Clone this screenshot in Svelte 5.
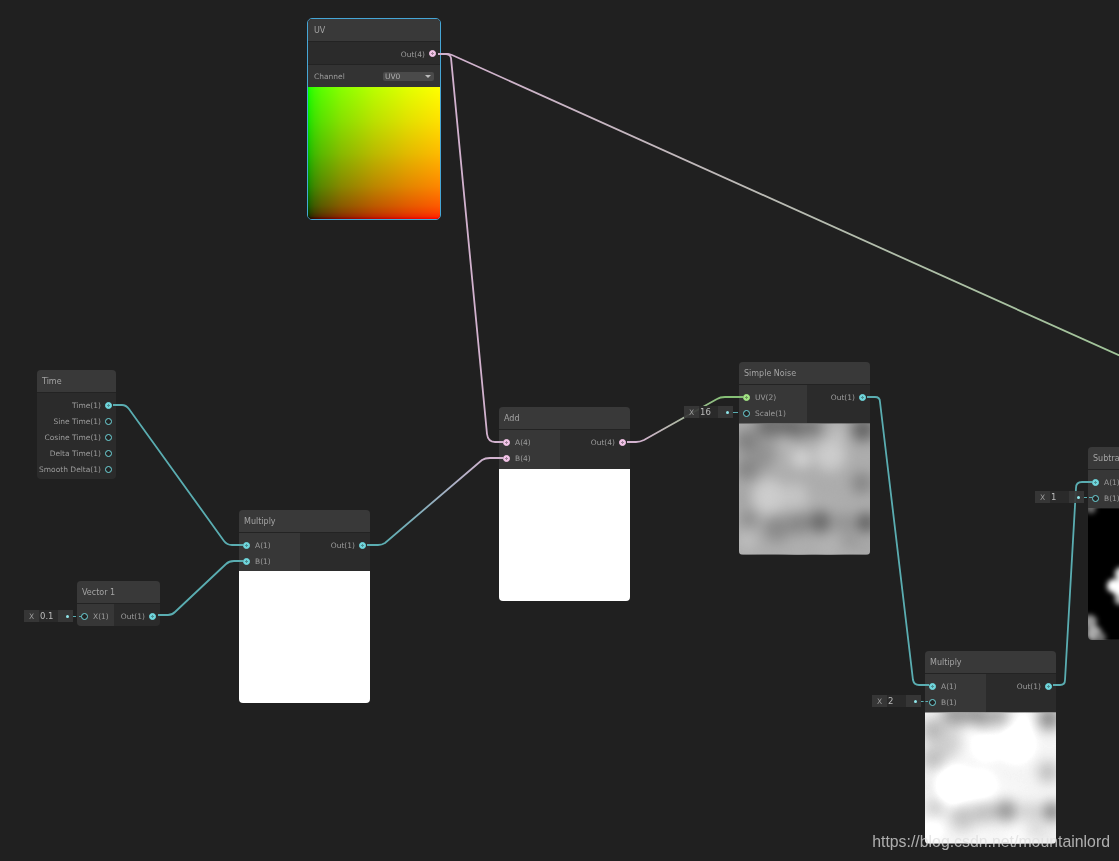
<script>
	const TEAL = '#6fd6dc';
	const PINK = '#f3c4e8';
	const GREEN = '#a2e484';

	const port = (label, color, on = true) => ({ label, color, on });

	const nodes = [
		{ title: 'Time', x: 37, y: 370, w: 79, right: ['Time(1)', 'Sine Time(1)', 'Cosine Time(1)', 'Delta Time(1)', 'Smooth Delta(1)'].map((l, i) => port(l, TEAL, i === 0)) },
		{ title: 'Vector 1', x: 77, y: 581, w: 83, split: 37, left: [port('X(1)', TEAL, false)], right: [port('Out(1)', TEAL)] },
		{ title: 'Multiply', x: 239, y: 510, w: 131, split: 61, preview: 'white', left: [port('A(1)', TEAL), port('B(1)', TEAL)], right: [port('Out(1)', TEAL)] },
		{ title: 'Add', x: 499, y: 407, w: 131, split: 61, pad: 3, preview: 'white', left: [port('A(4)', PINK), port('B(4)', PINK)], right: [port('Out(4)', PINK)] },
		{ title: 'Simple Noise', x: 739, y: 362, w: 131, split: 68, preview: 'noise', left: [port('UV(2)', GREEN), port('Scale(1)', TEAL, false)], right: [port('Out(1)', TEAL)] },
		{ title: 'Multiply', x: 925, y: 651, w: 131, split: 61, preview: 'doubled', left: [port('A(1)', TEAL), port('B(1)', TEAL, false)], right: [port('Out(1)', TEAL)] },
		{ title: 'Subtract', x: 1088, y: 447, w: 131, split: 61, preview: 'subtract', left: [port('A(1)', TEAL), port('B(1)', TEAL, false)], right: [port('Out(1)', TEAL)] }
	];

	const inputs = [
		{ x: 24, y: 610, value: '0.1', stub: 9 },
		{ x: 684, y: 406, value: '16', stub: 5 },
		{ x: 872, y: 695, value: '2', stub: 7 },
		{ x: 1035, y: 491, value: '1', stub: 8 }
	];

	const wires = [
		{ d: 'M438 54 H446 Q450 54 451 58 L487 434 Q488 442 495 442 H503', stroke: '#d2b2ce' },
		{ d: 'M438 54 H446 Q449 54 452 55 L1125 358', stroke: 'url(#uv-subtract)' },
		{ d: 'M113 405 H122 Q126 405 129 409 L224 541 Q227 545 232 545 H243', stroke: '#5aadb1' },
		{ d: 'M158 615 H168 Q172 615 175 612 L226 564 Q229 561 234 561 H243', stroke: '#5aadb1' },
		{ d: 'M367 545 H378 Q382 545 385 543 L482 460 Q485 458 490 458 H503', stroke: 'url(#mul-add)' },
		{ d: 'M627 442 H636 Q640 442 644 440 L717 399 Q720 397 725 397 H743', stroke: 'url(#add-noise)' },
		{ d: 'M867 397 H875 Q880 397 880 402 L913 680 Q914 685 919 685 H929', stroke: '#5aadb1' },
		{ d: 'M1053 685 H1060 Q1065 685 1065 680 L1076 488 Q1076 482 1082 482 H1092', stroke: '#5aadb1' }
	];

	const noiseBlobs = [
		[30, 2, 13, 112], [52, 5, 13, 106], [74, 3, 10, 116], [125, 6, 12, 100],
		[8, 18, 12, 128], [26, 32, 13, 146], [8, 46, 12, 134], [44, 38, 10, 176],
		[63, 35, 10, 212], [92, 32, 16, 204], [48, 20, 9, 182], [100, 12, 9, 192],
		[92, 62, 12, 172], [124, 60, 11, 134], [30, 74, 18, 204], [56, 74, 14, 196],
		[5, 74, 8, 160], [84, 82, 10, 176], [82, 99, 11, 104], [60, 101, 11, 134],
		[38, 106, 13, 138], [10, 96, 9, 140], [128, 100, 10, 92], [106, 100, 9, 142],
		[8, 118, 10, 190], [60, 124, 12, 174], [90, 124, 11, 178], [112, 118, 8, 150],
		[128, 126, 6, 158]
	];

	const subtractBlobs = [
		[34, 66, 7, 235], [26, 78, 7, 255], [38, 82, 12, 255], [32, 92, 5, 190],
		[2, 114, 7, 150], [6, 126, 8, 170], [13, 130, 5, 120], [3, 0, 5, 110]
	];
</script>

{#snippet dot(p)}
	<span class="port" class:on={p.on} style="--c: {p.color}"></span>
{/snippet}

{#snippet noise(kind)}
	<svg class="noise {kind}" viewBox="0 0 132 132" aria-hidden="true">
		<rect width="132" height="132" fill={kind === 'subtract' ? '#000' : '#adadad'} />
		<g class={kind === 'subtract' ? 'soft' : 'blur'}>
			{#each kind === 'subtract' ? subtractBlobs : noiseBlobs as [cx, cy, r, g]}
				<circle {cx} {cy} {r} fill="rgb({g},{g},{g})" />
			{/each}
		</g>
	</svg>
{/snippet}

<main class="graph">
	<section class="node uv">
		<h3>UV</h3>
		<div class="uv-out">
			<span>Out(4)</span>
			{@render dot(port('', PINK))}
		</div>
		<div class="control">
			<span>Channel</span>
			<span class="select">UV0<i></i></span>
		</div>
		<div class="uv-preview"></div>
	</section>

	{#each nodes as n}
		<section class="node" style="left: {n.x}px; top: {n.y}px; width: {n.w}px">
			<h3>{n.title}</h3>
			<div class="ports" style="--pad: {n.pad ?? 2}px">
				{#if n.left}
					<div class="col in" style="width: {n.split}px">
						{#each n.left as p}
							<div class="row">{@render dot(p)}<span>{p.label}</span></div>
						{/each}
					</div>
				{/if}
				<div class="col out">
					{#each n.right as p}
						<div class="row"><span>{p.label}</span>{@render dot(p)}</div>
					{/each}
				</div>
			</div>
			{#if n.preview === 'white'}
				<div class="blank"></div>
			{:else if n.preview}
				{@render noise(n.preview)}
			{/if}
		</section>
	{/each}

	<svg class="wires" width="1119" height="861" aria-hidden="true">
		<defs>
			<linearGradient id="uv-subtract" gradientUnits="userSpaceOnUse" x1="450" y1="54" x2="1119" y2="355">
				<stop offset="0" stop-color="#d2b2ce" />
				<stop offset="1" stop-color="#a0c498" />
			</linearGradient>
			<linearGradient id="mul-add" gradientUnits="userSpaceOnUse" x1="382" y1="545" x2="490" y2="458">
				<stop offset="0" stop-color="#5aadb1" />
				<stop offset="1" stop-color="#d2b2ce" />
			</linearGradient>
			<linearGradient id="add-noise" gradientUnits="userSpaceOnUse" x1="640" y1="442" x2="725" y2="397">
				<stop offset="0" stop-color="#d2b2ce" />
				<stop offset="1" stop-color="#86c076" />
			</linearGradient>
		</defs>
		{#each wires as w}
			<path d={w.d} stroke={w.stroke} />
		{/each}
	</svg>

	{#each inputs as f}
		<div class="input" style="left: {f.x}px; top: {f.y}px">
			<div class="box">
				<span class="axis">X</span>
				<span class="field">{f.value}</span>
				<i class="knob"></i>
			</div>
			<i class="stub" style="width: {f.stub}px"></i>
		</div>
	{/each}

	<p class="watermark">https://blog.csdn.net/mountainlord</p>
</main>

<style>
	:global(body) {
		background: #202020;
	}
	.graph {
		position: relative;
		width: 1119px;
		height: 861px;
		overflow: hidden;
		background: #202020;
		font-family: 'DejaVu Sans', sans-serif;
		font-size: 7.5px;
		color: #9c9c9c;
	}
	.node {
		position: absolute;
		z-index: 1;
		display: flex;
		flex-direction: column;
		background: #2b2b2b;
		border-radius: 4px;
		overflow: hidden;
		will-change: transform;
	}
	h3 {
		margin: 0;
		height: 23px;
		padding: 1px 0 0 5px;
		background: #393939;
		border-bottom: 1px solid #232323;
		box-sizing: border-box;
		font-size: 8px;
		font-weight: 400;
		line-height: 22px;
		color: #a4a4a4;
	}
	.ports {
		display: flex;
	}
	.col {
		display: flex;
		flex-direction: column;
		padding: 4px 0 var(--pad);
		box-sizing: border-box;
	}
	.col.in {
		flex: none;
		background: #373737;
	}
	.col.out {
		flex: 1;
		align-items: flex-end;
	}
	.row {
		display: flex;
		align-items: center;
		height: 16px;
		white-space: nowrap;
	}
	.in .row {
		padding-left: 4px;
		gap: 6px;
	}
	.out .row {
		padding-right: 5px;
		gap: 4px;
	}
	.port {
		flex: none;
		width: 7px;
		height: 7px;
		margin: 0 -0.5px;
		box-sizing: border-box;
		border: 1.6px solid var(--c);
		border-radius: 50%;
		background: #232323;
	}
	.port.on {
		background: var(--c);
		border-color: var(--c);
		background-image: radial-gradient(circle, rgba(30, 30, 30, 0.4) 0 1px, transparent 1.3px);
	}
	.blank {
		height: 132px;
		background: #fff;
	}
	.noise {
		display: block;
		width: 100%;
		height: 132px;
	}
	.noise.doubled {
		filter: brightness(1.42);
	}
	.blur {
		filter: blur(6.5px);
	}
	.soft {
		filter: blur(2.5px);
	}

	.uv {
		left: 307px;
		top: 18px;
		width: 134px;
		height: 202px;
		box-sizing: border-box;
		border: 1px solid #46a6d6;
		border-radius: 5px;
	}
	.uv h3 {
		padding-left: 6px;
	}
	.uv-out {
		display: flex;
		justify-content: flex-end;
		align-items: center;
		gap: 4px;
		height: 23px;
		padding-right: 5px;
		border-bottom: 1px solid #232323;
		box-sizing: border-box;
	}
	.uv-out span:first-child {
		padding-top: 2px;
	}
	.control {
		display: flex;
		align-items: center;
		justify-content: space-between;
		height: 22px;
		padding: 0 6px;
		background: #333;
	}
	.select {
		position: relative;
		width: 51px;
		height: 9px;
		padding-left: 2px;
		box-sizing: border-box;
		background: #4a4a4a;
		border-radius: 2px;
		line-height: 9px;
		color: #b0b0b0;
	}
	.select i {
		position: absolute;
		right: 3px;
		top: 3px;
		border: 3px solid transparent;
		border-top-color: #bcbcbc;
		border-bottom: 0;
	}
	/* uv is linear in the shader, these stops are its gamma-corrected ramp */
	.uv-preview {
		flex: 1;
		background:
			linear-gradient(to top, #000, #002b00 2%, #004200 5%, #005a00 10%, #008700 25%, #00ba00 50%, #00e100 75%, #0f0),
			linear-gradient(to right, #000, #2b0000 2%, #420000 5%, #5a0000 10%, #870000 25%, #ba0000 50%, #e10000 75%, #f00);
		background-blend-mode: screen;
	}

	.wires {
		position: absolute;
		left: 0;
		top: 0;
		z-index: 2;
		pointer-events: none;
	}
	.wires path {
		fill: none;
		stroke-width: 1.8;
	}

	.input {
		position: absolute;
		z-index: 3;
		display: flex;
		align-items: center;
		will-change: transform;
	}
	.box {
		display: flex;
		align-items: center;
		width: 49px;
		height: 12px;
		background: rgba(56, 56, 56, 0.92);
	}
	.axis {
		width: 15px;
		text-align: center;
	}
	.field {
		width: 19px;
		height: 12px;
		padding-left: 1px;
		box-sizing: border-box;
		background: #2a2a2a;
		font-size: 8.5px;
		line-height: 12px;
		color: #bcbcbc;
	}
	.knob {
		width: 3px;
		height: 3px;
		margin-left: 8px;
		border-radius: 50%;
		background: #8fe6ea;
	}
	.stub {
		height: 0;
		border-top: 1px dashed #5aadb1;
	}

	.watermark {
		position: absolute;
		z-index: 4;
		right: 9px;
		top: 833px;
		margin: 0;
		font-family: 'Liberation Sans', sans-serif;
		font-size: 15.85px;
		line-height: 18px;
		color: rgba(222, 222, 222, 0.75);
	}
</style>
